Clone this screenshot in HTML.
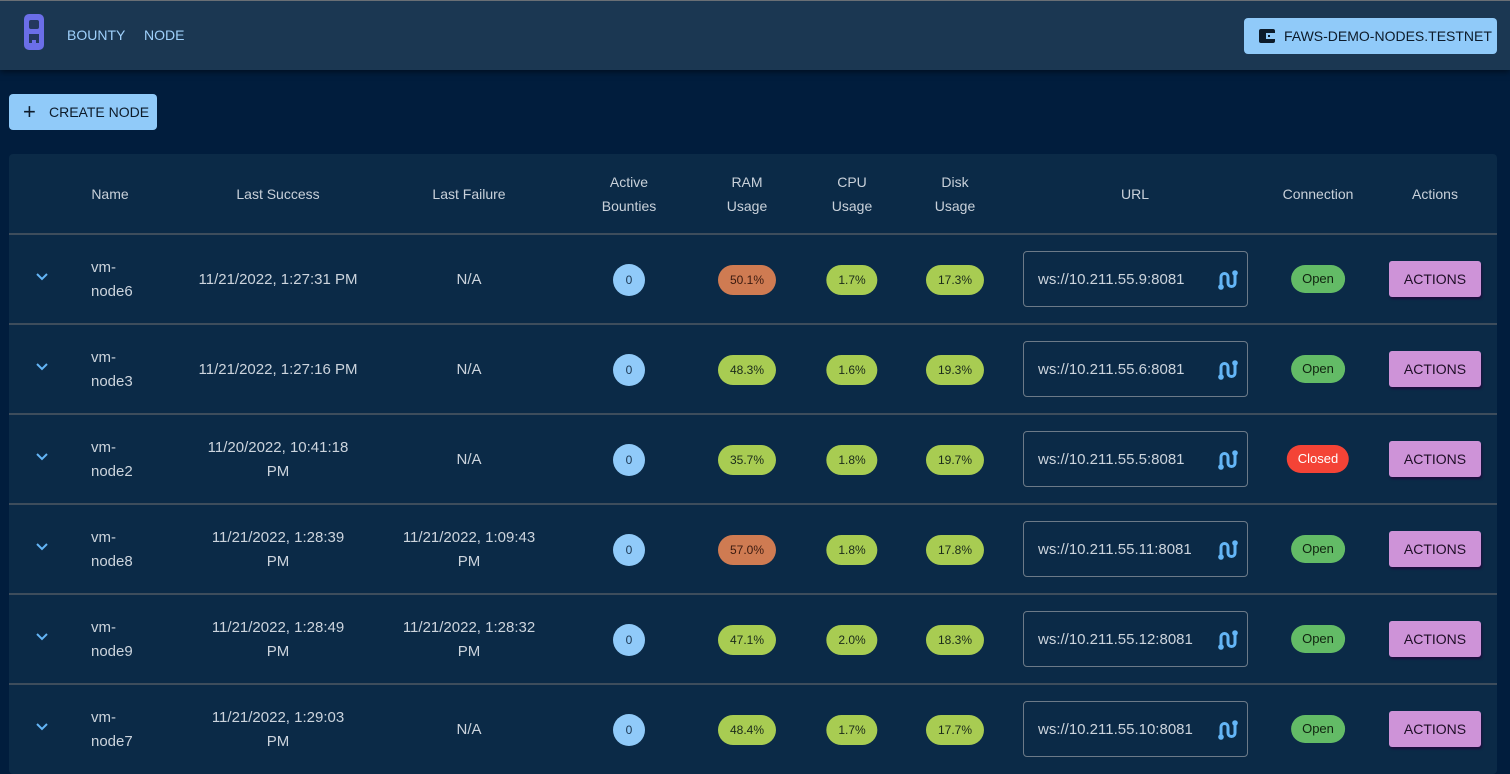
<!DOCTYPE html>
<html><head><meta charset="utf-8"><style>
*{box-sizing:border-box;margin:0;padding:0}
body{width:1510px;height:770px;overflow:hidden;background:#011d3d;font-family:"Liberation Sans",sans-serif;position:relative;color:#d6dde6}
.hdr{position:absolute;left:0;top:0;width:1510px;height:70px;background:#1b3752;border-top:1px solid #6a6f75;box-shadow:0 2px 6px rgba(0,0,0,.5)}
.nav{position:absolute;top:26px;font-size:14px;color:#9fd0fb}
.wallet{position:absolute;left:1244px;top:17px;width:253px;height:36px;background:#90caf9;border-radius:4px;color:#0d1b2a;font-size:14px;line-height:36px;padding-left:40px}
.create{position:absolute;left:9px;top:94px;width:148px;height:36px;background:#90caf9;border-radius:4px;color:#0d1b2a;font-size:14px;line-height:36px;padding-left:40px}
.tbl{position:absolute;left:9px;top:154px;width:1488px;height:620px;background:#0b2a47;border-radius:4px}
.c{position:absolute;transform:translate(-50%,-50%);text-align:center;white-space:nowrap}
.th{font-size:14px;color:#c9d1da;line-height:24px}
.row{position:absolute;left:0;width:1488px;height:90px;border-top:2px solid #3e4d5c}
.td{font-size:15px;color:#ccd4dd;line-height:24px}
.pill{font-size:12px;color:#1a2a1a;height:30px;line-height:30px;border-radius:15px;padding:0 12px}
.g{background:#a8cc52}.o{background:#cf7b52;color:#3a1a10}
.zero{width:32px;height:32px;border-radius:50%;background:#90caf9;color:#1b3752;font-size:12px;line-height:32px}
.url{position:absolute;left:1014px;top:16px;width:225px;height:56px;border:1px solid #6c7a88;border-radius:4px;font-size:15px;color:#ccd4dd;line-height:56px;padding-left:14px}
.url svg{position:absolute;right:8px;top:16px}
.st{font-size:13px;height:28px;line-height:28px;border-radius:14px;padding:0 11px;background:#63bb66;color:#10230f}
.cl{background:#f44336;color:#fff}
.act{position:absolute;left:1380px;top:26px;width:92px;height:36px;background:#ce93d8;border-radius:3px;color:#1e0f26;font-size:14px;line-height:36px;text-align:center;box-shadow:1px 2px 2px rgba(40,0,60,.7)}
.chev{position:absolute;left:26px;top:37px}
.nm{position:absolute;left:82px;top:21px;font-size:15px;line-height:24px;color:#ccd4dd}
</style></head><body>
<div class="hdr">
<svg style="position:absolute;left:24px;top:13px" width="20" height="36" viewBox="0 0 20 36"><rect x="0" y="0" width="20" height="36" rx="5" fill="#6b6ee8"/><rect x="5" y="6" width="10" height="9" rx="2" fill="#24385e"/><path d="M5 20h10v9h-3v-3h-4v3H5z" fill="#24385e"/></svg>
<div class="nav" style="left:67px">BOUNTY</div><div class="nav" style="left:144px">NODE</div>
<div class="wallet"><svg style="position:absolute;left:15px;top:11px" width="16" height="14" viewBox="0 0 16 14"><rect x="0" y="0" width="16" height="14" rx="2" fill="#0d1b2a"/><rect x="7" y="4" width="9" height="6" fill="#90caf9"/><rect x="9" y="6" width="2" height="2" fill="#0d1b2a"/></svg>FAWS-DEMO-NODES.TESTNET</div>
</div>
<div class="create"><span style="position:absolute;left:14px;top:0;font-size:22px">+</span>CREATE NODE</div>
<div class="tbl">
<div class="c th" style="left:101px;top:40px">Name</div>
<div class="c th" style="left:269px;top:40px">Last Success</div>
<div class="c th" style="left:460px;top:40px">Last Failure</div>
<div class="c th" style="left:620px;top:40px">Active<br>Bounties</div>
<div class="c th" style="left:738px;top:40px">RAM<br>Usage</div>
<div class="c th" style="left:843px;top:40px">CPU<br>Usage</div>
<div class="c th" style="left:946px;top:40px">Disk<br>Usage</div>
<div class="c th" style="left:1126px;top:40px">URL</div>
<div class="c th" style="left:1309px;top:40px">Connection</div>
<div class="c th" style="left:1426px;top:40px">Actions</div>

<div class="row" style="top:79px">
<svg class="chev" width="14" height="10" viewBox="0 0 14 10"><path d="M2 2l5 5 5-5" stroke="#64b5f6" stroke-width="2" fill="none"/></svg>
<div class="nm">vm-<br>node6</div>
<div class="c td" style="left:269px;top:45px">11/21/2022, 1:27:31 PM</div>
<div class="c td" style="left:460px;top:45px">N/A</div>
<div class="c zero" style="left:620px;top:45px">0</div>
<div class="c pill o" style="left:738px;top:45px">50.1%</div>
<div class="c pill g" style="left:843px;top:45px">1.7%</div>
<div class="c pill g" style="left:946px;top:45px">17.3%</div>
<div class="url">ws://10.211.55.9:8081<svg width="24" height="24" viewBox="0 0 24 24"><path d="M6 18V9a3.5 3.5 0 0 1 7 0v6a3.5 3.5 0 0 0 7 0V6" stroke="#64b5f6" stroke-width="3" fill="none"/><circle cx="6" cy="19" r="2.8" fill="#64b5f6"/><circle cx="20" cy="5" r="2.8" fill="#64b5f6"/></svg></div>
<div class="c st" style="left:1309px;top:44px">Open</div>
<div class="act">ACTIONS</div>
</div>

<div class="row" style="top:169px">
<svg class="chev" width="14" height="10" viewBox="0 0 14 10"><path d="M2 2l5 5 5-5" stroke="#64b5f6" stroke-width="2" fill="none"/></svg>
<div class="nm">vm-<br>node3</div>
<div class="c td" style="left:269px;top:45px">11/21/2022, 1:27:16 PM</div>
<div class="c td" style="left:460px;top:45px">N/A</div>
<div class="c zero" style="left:620px;top:45px">0</div>
<div class="c pill g" style="left:738px;top:45px">48.3%</div>
<div class="c pill g" style="left:843px;top:45px">1.6%</div>
<div class="c pill g" style="left:946px;top:45px">19.3%</div>
<div class="url">ws://10.211.55.6:8081<svg width="24" height="24" viewBox="0 0 24 24"><path d="M6 18V9a3.5 3.5 0 0 1 7 0v6a3.5 3.5 0 0 0 7 0V6" stroke="#64b5f6" stroke-width="3" fill="none"/><circle cx="6" cy="19" r="2.8" fill="#64b5f6"/><circle cx="20" cy="5" r="2.8" fill="#64b5f6"/></svg></div>
<div class="c st" style="left:1309px;top:44px">Open</div>
<div class="act">ACTIONS</div>
</div>

<div class="row" style="top:259px">
<svg class="chev" width="14" height="10" viewBox="0 0 14 10"><path d="M2 2l5 5 5-5" stroke="#64b5f6" stroke-width="2" fill="none"/></svg>
<div class="nm">vm-<br>node2</div>
<div class="c td" style="left:269px;top:45px">11/20/2022, 10:41:18<br>PM</div>
<div class="c td" style="left:460px;top:45px">N/A</div>
<div class="c zero" style="left:620px;top:45px">0</div>
<div class="c pill g" style="left:738px;top:45px">35.7%</div>
<div class="c pill g" style="left:843px;top:45px">1.8%</div>
<div class="c pill g" style="left:946px;top:45px">19.7%</div>
<div class="url">ws://10.211.55.5:8081<svg width="24" height="24" viewBox="0 0 24 24"><path d="M6 18V9a3.5 3.5 0 0 1 7 0v6a3.5 3.5 0 0 0 7 0V6" stroke="#64b5f6" stroke-width="3" fill="none"/><circle cx="6" cy="19" r="2.8" fill="#64b5f6"/><circle cx="20" cy="5" r="2.8" fill="#64b5f6"/></svg></div>
<div class="c st cl" style="left:1309px;top:44px">Closed</div>
<div class="act">ACTIONS</div>
</div>

<div class="row" style="top:349px">
<svg class="chev" width="14" height="10" viewBox="0 0 14 10"><path d="M2 2l5 5 5-5" stroke="#64b5f6" stroke-width="2" fill="none"/></svg>
<div class="nm">vm-<br>node8</div>
<div class="c td" style="left:269px;top:45px">11/21/2022, 1:28:39<br>PM</div>
<div class="c td" style="left:460px;top:45px">11/21/2022, 1:09:43<br>PM</div>
<div class="c zero" style="left:620px;top:45px">0</div>
<div class="c pill o" style="left:738px;top:45px">57.0%</div>
<div class="c pill g" style="left:843px;top:45px">1.8%</div>
<div class="c pill g" style="left:946px;top:45px">17.8%</div>
<div class="url">ws://10.211.55.11:8081<svg width="24" height="24" viewBox="0 0 24 24"><path d="M6 18V9a3.5 3.5 0 0 1 7 0v6a3.5 3.5 0 0 0 7 0V6" stroke="#64b5f6" stroke-width="3" fill="none"/><circle cx="6" cy="19" r="2.8" fill="#64b5f6"/><circle cx="20" cy="5" r="2.8" fill="#64b5f6"/></svg></div>
<div class="c st" style="left:1309px;top:44px">Open</div>
<div class="act">ACTIONS</div>
</div>

<div class="row" style="top:439px">
<svg class="chev" width="14" height="10" viewBox="0 0 14 10"><path d="M2 2l5 5 5-5" stroke="#64b5f6" stroke-width="2" fill="none"/></svg>
<div class="nm">vm-<br>node9</div>
<div class="c td" style="left:269px;top:45px">11/21/2022, 1:28:49<br>PM</div>
<div class="c td" style="left:460px;top:45px">11/21/2022, 1:28:32<br>PM</div>
<div class="c zero" style="left:620px;top:45px">0</div>
<div class="c pill g" style="left:738px;top:45px">47.1%</div>
<div class="c pill g" style="left:843px;top:45px">2.0%</div>
<div class="c pill g" style="left:946px;top:45px">18.3%</div>
<div class="url">ws://10.211.55.12:8081<svg width="24" height="24" viewBox="0 0 24 24"><path d="M6 18V9a3.5 3.5 0 0 1 7 0v6a3.5 3.5 0 0 0 7 0V6" stroke="#64b5f6" stroke-width="3" fill="none"/><circle cx="6" cy="19" r="2.8" fill="#64b5f6"/><circle cx="20" cy="5" r="2.8" fill="#64b5f6"/></svg></div>
<div class="c st" style="left:1309px;top:44px">Open</div>
<div class="act">ACTIONS</div>
</div>

<div class="row" style="top:529px">
<svg class="chev" width="14" height="10" viewBox="0 0 14 10"><path d="M2 2l5 5 5-5" stroke="#64b5f6" stroke-width="2" fill="none"/></svg>
<div class="nm">vm-<br>node7</div>
<div class="c td" style="left:269px;top:45px">11/21/2022, 1:29:03<br>PM</div>
<div class="c td" style="left:460px;top:45px">N/A</div>
<div class="c zero" style="left:620px;top:45px">0</div>
<div class="c pill g" style="left:738px;top:45px">48.4%</div>
<div class="c pill g" style="left:843px;top:45px">1.7%</div>
<div class="c pill g" style="left:946px;top:45px">17.7%</div>
<div class="url">ws://10.211.55.10:8081<svg width="24" height="24" viewBox="0 0 24 24"><path d="M6 18V9a3.5 3.5 0 0 1 7 0v6a3.5 3.5 0 0 0 7 0V6" stroke="#64b5f6" stroke-width="3" fill="none"/><circle cx="6" cy="19" r="2.8" fill="#64b5f6"/><circle cx="20" cy="5" r="2.8" fill="#64b5f6"/></svg></div>
<div class="c st" style="left:1309px;top:44px">Open</div>
<div class="act">ACTIONS</div>
</div>
</div>
</body></html>
